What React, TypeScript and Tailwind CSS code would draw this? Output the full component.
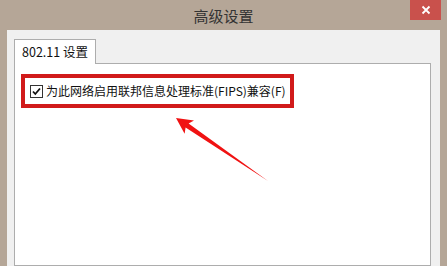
import React from 'react';

const font = { fontFamily: '"Noto Sans CJK SC", "Microsoft YaHei", sans-serif' };

const CheckBox: React.FC = () => (
  <svg width="13" height="13" viewBox="0 0 13 13" className="shrink-0">
    <rect x="0.5" y="0.5" width="12" height="12" fill="#fff" stroke="#333" />
    <path d="M3 6.5 L5.3 9 L10 3.5" fill="none" stroke="#111" strokeWidth="1.8" />
  </svg>
);

const Arrow: React.FC = () => (
  <svg
    className="absolute left-0 top-0 pointer-events-none"
    width="447"
    height="266"
    viewBox="0 0 447 266"
  >
    <polygon
      points="176,118 194,120.5 188.6,123.6 268,181 185.6,127.6 184.6,133.8"
      fill="#f01212"
    />
  </svg>
);

export default function App() {
  return (
    <div
      className="relative w-[447px] h-[266px] overflow-hidden bg-[#b5a697] flex flex-col"
      style={font}
    >
      {/* title bar */}
      <div className="relative h-[30px] shrink-0 flex items-center justify-center">
        <span className="text-[15px] text-[#333] leading-none">高级设置</span>
        <div className="absolute right-[6px] top-0 w-[31px] h-[20px] bg-[#c9514c] flex items-center justify-center">
          <svg width="10" height="10" viewBox="0 0 10 10">
            <path d="M1.5 1.5 L8.5 8.5 M8.5 1.5 L1.5 8.5" stroke="#fff" strokeWidth="1.8" />
          </svg>
        </div>
      </div>

      {/* dialog body */}
      <div className="flex-1 mx-[7px] bg-[#f0f0f0] pl-[7px] pr-[9px] pt-[9px] flex flex-col">
        <div className="w-[82px] h-[25px] bg-white border border-b-0 border-[#adadad] flex items-center pl-[7px] -mb-px relative z-10">
          <span className="text-[12.5px] text-[#111] leading-none">802.11 设置</span>
        </div>
        <div className="flex-1 bg-white border border-[#adadad] pl-[6px] pt-[10px]">
          <div className="w-[273px] h-[34px] border-[4px] border-[#d11a1a] flex items-center pl-[5px] gap-[3px]">
            <CheckBox />
            <span className="text-[12px] text-[#111] leading-none whitespace-nowrap">
              为此网络启用联邦信息处理标准(FIPS)兼容(F)
            </span>
          </div>
        </div>
      </div>

      <Arrow />
    </div>
  );
}
